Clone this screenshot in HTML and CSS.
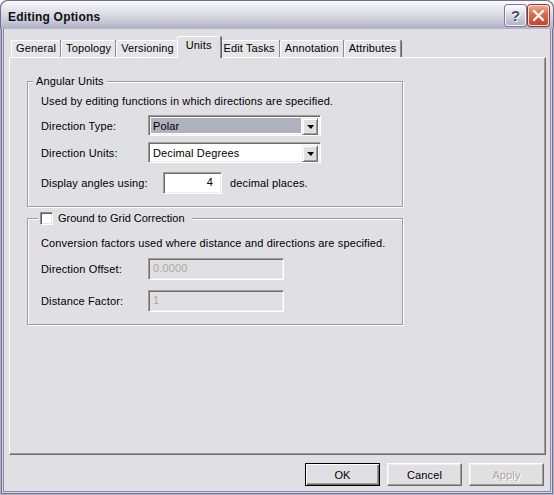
FILE: index.html
```html
<!DOCTYPE html>
<html>
<head>
<meta charset="utf-8">
<title>Editing Options</title>
<link rel="stylesheet" href="styles.css">
</head>
<body>
<div class="window">
  <div class="titlebar">
    <span class="title">Editing Options</span>
    <span class="ctrl help">?</span>
    <span class="ctrl close">
      <svg width="13" height="13" viewBox="0 0 13 13"><path d="M2 2 L11 11 M11 2 L2 11" stroke="#fff" stroke-width="2.4" stroke-linecap="round" fill="none"/></svg>
    </span>
  </div>
  <div class="client">
    <div class="tabs">
      <span class="tab">General</span>
      <span class="tab">Topology</span>
      <span class="tab">Versioning</span>
      <span class="tab active">Units</span>
      <span class="tab">Edit Tasks</span>
      <span class="tab">Annotation</span>
      <span class="tab">Attributes</span>
    </div>
    <div class="panel">
      <fieldset class="group">
        <legend class="legend">Angular Units</legend>
        <div class="gbody g1">
          <div class="note">Used by editing functions in which directions are specified.</div>
          <div class="row r1">
            <span class="lbl">Direction Type:</span>
            <div class="combo">
              <span class="value selected">Polar</span>
              <span class="arrow"><span class="tri"></span></span>
            </div>
          </div>
          <div class="row r2">
            <span class="lbl">Direction Units:</span>
            <div class="combo">
              <span class="value">Decimal Degrees</span>
              <span class="arrow"><span class="tri"></span></span>
            </div>
          </div>
          <div class="row r3">
            <span class="lbl wide">Display angles using:</span>
            <span class="num">4</span>
            <span class="suffix">decimal places.</span>
          </div>
        </div>
      </fieldset>
      <fieldset class="group second">
        <legend class="legend check-legend"><span class="checkbox"></span><span>Ground to Grid Correction</span></legend>
        <div class="gbody g2">
          <div class="note">Conversion factors used where distance and directions are specified.</div>
          <div class="row r4">
            <span class="lbl">Direction Offset:</span>
            <span class="field disabled">0.0000</span>
          </div>
          <div class="row r5">
            <span class="lbl">Distance Factor:</span>
            <span class="field disabled">1</span>
          </div>
        </div>
      </fieldset>
    </div>
    <div class="buttons">
      <span class="btn default">OK</span>
      <span class="btn">Cancel</span>
      <span class="btn off">Apply</span>
    </div>
  </div>
</div>
</body>
</html>
```
FILE: styles.css
```css
* { box-sizing: border-box; }

body {
  margin: 0;
  font-family: "Liberation Sans", Arial, sans-serif;
  font-size: 11px;
  letter-spacing: 0.13px;
  color: #000;
  background: #ffffff;
}

.window {
  width: 554px;
  height: 495px;
  display: flex;
  flex-direction: column;
  background: #e0dfe3;
  border-radius: 8px 8px 0 0;
  overflow: hidden;
  box-shadow:
    inset 0 0 0 1px #b4b4c8,
    inset 0 0 0 2px #6f6f90,
    inset 0 0 0 3px #d6d6e0,
    inset 0 0 0 4px #8a8aa8;
}

.titlebar {
  flex: none;
  height: 29px;
  display: flex;
  align-items: center;
  padding: 1px 4px 0 7px;
  border: 1px solid #6f6f90;
  border-bottom: 1px solid #b4b4c8;
  border-radius: 8px 8px 0 0;
  background: linear-gradient(#fbfbfd 0%, #ececf2 20%, #dadae4 50%, #c9c9d8 75%, #b2b2c8 100%);
}

.title {
  flex: 1;
  font-size: 12px;
  font-weight: bold;
  color: #111;
  letter-spacing: 0.2px;
  padding-top: 4px;
}

.ctrl {
  width: 21px;
  height: 21px;
  border-radius: 3px;
  display: flex;
  align-items: center;
  justify-content: center;
  margin-left: 2px;
}

.help {
  background: linear-gradient(#fdfdff, #d8d8e6 45%, #b4b4ca 100%);
  border: 1px solid #f4f4fa;
  box-shadow: 0 0 0 1px #7c7c9c;
  color: #4a4a6e;
  font-weight: bold;
  font-size: 15px;
  letter-spacing: 0;
  text-shadow: 1px 1px 0 #fff;
}

.close {
  background: linear-gradient(#f2a88f, #e0664a 45%, #c4452c 100%);
  border: 1px solid #fbe2d8;
  box-shadow: 0 0 0 1px #8a3a2a;
}

.client {
  flex: 1;
  display: flex;
  flex-direction: column;
  padding: 7px 8px 9px 9px;
}

.tabs {
  height: 22px;
  display: flex;
  align-items: flex-end;
  padding-left: 2px;
  margin-bottom: -1px;
  position: relative;
  z-index: 1;
}

.tab {
  height: 17px;
  margin-bottom: 1px;
  padding: 0 4px;
  line-height: 15px;
  border: 1px solid;
  border-color: #ffffff #8d8d92 transparent #ffffff;
  border-bottom: none;
  border-radius: 2px 2px 0 0;
  background: #e6e5e9;
  box-shadow: 1px 0 0 #5f5f66;
  white-space: nowrap;
}

.tab.active {
  height: 22px;
  margin: 0 -2px;
  padding: 1px 8px 0;
  line-height: 15px;
  background: #e0dfe3;
  position: relative;
  z-index: 2;
}

.panel {
  flex: 1;
  display: flex;
  flex-direction: column;
  align-items: flex-start;
  padding: 17px 0 0 17px;
  background: #e0dfe3;
  border: 1px solid;
  border-color: #ffffff #716f64 #716f64 #ffffff;
  box-shadow: inset -1px -1px 0 #9d9da1;
}

.group {
  width: 376px;
  margin: 0;
  padding: 0;
  min-width: 0;
  border: 1px solid #9d9da1;
  box-shadow: 1px 1px 0 #ffffff, inset 1px 1px 0 #ffffff;
}

.group.second {
  margin-top: 5px;
}

.legend {
  margin-left: 5px;
  padding: 0 3px;
  line-height: 13px;
  background: #e0dfe3;
}

.check-legend {
  margin-left: 10px;
  padding: 0 7px 0 2px;
  display: flex;
  align-items: center;
  gap: 5px;
  letter-spacing: 0;
}

.checkbox {
  width: 13px;
  height: 13px;
  background: #ffffff;
  border: 1px solid;
  border-color: #8d8d92 #ffffff #ffffff #8d8d92;
  box-shadow: inset 1px 1px 0 #5f5f66, inset -1px -1px 0 #e6e5e9;
}

.gbody {
  padding: 7px 12px 12px 13px;
}

.gbody.g2 {
  padding-top: 12px;
}

.note {
  line-height: 13px;
  white-space: nowrap;
}

.row {
  display: flex;
  align-items: center;
}

.r1 { margin-top: 7px; }
.r2 { margin-top: 6px; }
.r3 { margin-top: 9px; }
.r4 { margin-top: 8px; }
.r5 { margin-top: 10px; }

.lbl {
  width: 107px;
  flex: none;
}

.lbl.wide {
  width: 122px;
}

.combo {
  width: 173px;
  height: 21px;
  display: flex;
  background: #ffffff;
  border: 1px solid;
  border-color: #9d9da1 #ffffff #ffffff #9d9da1;
  box-shadow: inset 1px 1px 0 #716f64, inset -1px -1px 0 #f1efe2;
  padding: 2px;
}

.value {
  flex: 1;
  line-height: 17px;
  padding-left: 2px;
  margin-right: 1px;
}

.value.selected {
  background: #afb1be;
}

.arrow {
  width: 16px;
  height: 17px;
  display: flex;
  align-items: center;
  justify-content: center;
  background: #e0dfe3;
  border: 1px solid;
  border-color: #f1efe2 #716f64 #716f64 #f1efe2;
  box-shadow: inset 1px 1px 0 #ffffff, inset -1px -1px 0 #9d9da1;
}

.tri {
  width: 0;
  height: 0;
  border-left: 4px solid transparent;
  border-right: 3px solid transparent;
  border-top: 4px solid #000;
  margin-top: 1px;
}

.num {
  width: 59px;
  height: 22px;
  line-height: 18px;
  text-align: right;
  padding-right: 8px;
  background: #ffffff;
  border: 1px solid;
  border-color: #9d9da1 #ffffff #ffffff #9d9da1;
  box-shadow: inset 1px 1px 0 #716f64, inset -1px -1px 0 #f1efe2;
}

.suffix {
  margin-left: 8px;
}

.field {
  width: 136px;
  height: 22px;
  line-height: 18px;
  padding-left: 4px;
  border: 1px solid;
  border-color: #9d9da1 #ffffff #ffffff #9d9da1;
  box-shadow: inset 1px 1px 0 #716f64, inset -1px -1px 0 #f1efe2;
}

.field.disabled {
  background: #e0dfe3;
  color: #aca899;
}

.buttons {
  flex: none;
  display: flex;
  justify-content: flex-end;
  gap: 7px;
  margin-top: 8px;
  padding-right: 2px;
}

.btn {
  width: 75px;
  height: 23px;
  display: flex;
  align-items: center;
  justify-content: center;
  background: #e0dfe3;
  border: 1px solid;
  border-color: #ffffff #716f64 #716f64 #ffffff;
  box-shadow: inset -1px -1px 0 #9d9da1, inset 1px 1px 0 #f1efe2;
}

.btn.default {
  border-color: #000000;
  box-shadow: inset 1px 1px 0 #ffffff, inset -1px -1px 0 #716f64, inset -2px -2px 0 #9d9da1;
}

.btn.off {
  color: #aca899;
  text-shadow: 1px 1px 0 #ffffff;
}
```
